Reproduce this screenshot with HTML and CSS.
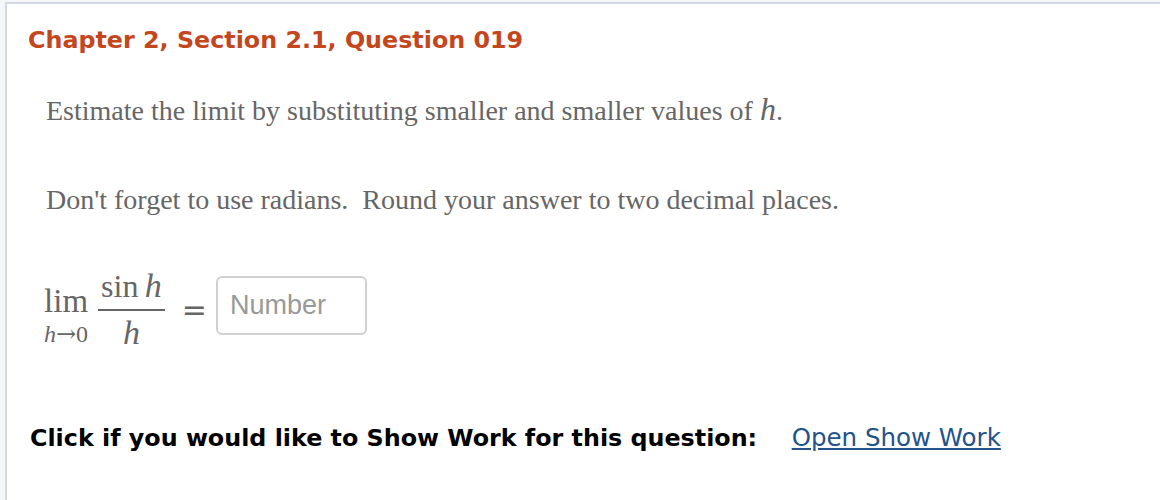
FILE: index.html
```html
<!doctype html>
<html>
	<head>
		<meta charset="utf-8">
		<title>Chapter 2, Section 2.1, Question 019</title>
		<link rel="stylesheet" href="styles.css">
	</head>
<body>

	<!--question start-->
	<div id="question">
		<h2>Chapter 2, Section 2.1, Question 019</h2>
		<div class="q_body">
			<p>Estimate the limit by substituting smaller and smaller values of <i class="var">h</i>.</p>
			<p>Don't forget to use radians.&nbsp; Round your answer to two decimal places.</p>
			<div class="q_math">
				<span class="lim">
					<span class="lim_top">lim</span>
					<span class="lim_sub"><i>h</i><span class="arrow">&rarr;</span>0</span>
				</span>
				<span class="frac">
					<span class="num">sin&thinsp;<i>h</i></span>
					<span class="den"><i>h</i></span>
				</span>
				<span class="eq">=</span>
				<input type="text" class="q_input" placeholder="Number">
			</div>
		</div>
		<div class="q_work">
			<b>Click if you would like to Show Work for this question:</b>
			<a href="#">Open Show Work</a>
		</div>
	</div>
	<!--end question-->

</body>
</html>
```

FILE: styles.css
```css
*{margin:0;padding:0;}
body{background:#f5f6f8;font-family:"DejaVu Sans",Verdana,sans-serif;color:#000;}

/*question start*/
#question{margin:2px 0 0 5px;background:#fff;border-top:2px solid #d3d9e1;border-left:2px solid #d3d9e1;height:496px;padding:0 0 0 21px;}
#question h2{font-size:23.8px;color:#c4461d;font-weight:bold;padding-top:22px;line-height:28px;}
#question .q_body{font-family:"Liberation Serif","Times New Roman",serif;color:#666;font-size:28px;padding-left:18px;}
#question .q_body p{line-height:32px;}
#question .q_body p:first-child{margin-top:39px;}
#question .q_body p + p{margin-top:57px;}
#question .var{font-size:32px;}
#question .q_math{display:flex;align-items:center;margin-top:54px;}
#question .lim{display:flex;flex-direction:column;align-items:center;align-self:flex-end;margin:0 0 3px -2px;}
#question .lim_top{font-size:33px;line-height:28px;}
#question .lim_sub{font-size:24px;line-height:24px;margin-top:7px;}
#question .lim_sub .arrow{font-family:"DejaVu Serif",serif;font-size:24px;}
#question .frac{display:flex;flex-direction:column;align-items:center;margin-left:10px;}
#question .frac .num{font-size:32px;line-height:32px;padding:0 3px 7px;border-bottom:2px solid #666;}
#question .frac .den{font-size:32px;line-height:32px;padding-top:6px;}
#question .frac i{font-size:34px;}
#question .eq{font-family:"DejaVu Sans",sans-serif;font-size:30px;margin:0 9px 0 17px;}
#question .q_input{width:151px;height:59px;box-sizing:border-box;border:2px solid #d0d0d0;border-radius:6px;padding-left:12px;font-family:"Liberation Sans",Helvetica,sans-serif;font-size:27px;color:#333;outline:none;margin-top:-8px;}
#question .q_input::placeholder{color:#999;}
#question .q_work{margin-top:74px;font-size:23.8px;padding-left:2px;}
#question .q_work b{font-weight:bold;}
#question .q_work a{color:#24538b;margin-left:27px;font-size:24.5px;text-decoration:underline;}
/*end question*/
```
